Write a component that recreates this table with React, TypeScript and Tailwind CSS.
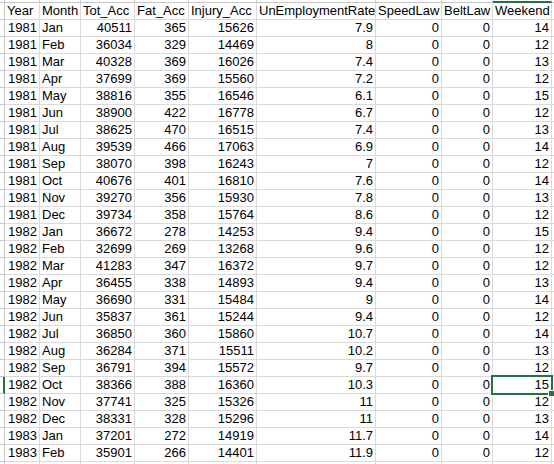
const headers = ["Year", "Month", "Tot_Acc", "Fat_Acc", "Injury_Acc", "UnEmploymentRate", "SpeedLaw", "BeltLaw", "Weekend"];

const rows: (string | number)[][] = [
  [1981, "Jan", 40511, 365, 15626, 7.9, 0, 0, 14],
  [1981, "Feb", 36034, 329, 14469, 8, 0, 0, 12],
  [1981, "Mar", 40328, 369, 16026, 7.4, 0, 0, 13],
  [1981, "Apr", 37699, 369, 15560, 7.2, 0, 0, 12],
  [1981, "May", 38816, 355, 16546, 6.1, 0, 0, 15],
  [1981, "Jun", 38900, 422, 16778, 6.7, 0, 0, 12],
  [1981, "Jul", 38625, 470, 16515, 7.4, 0, 0, 13],
  [1981, "Aug", 39539, 466, 17063, 6.9, 0, 0, 14],
  [1981, "Sep", 38070, 398, 16243, 7, 0, 0, 12],
  [1981, "Oct", 40676, 401, 16810, 7.6, 0, 0, 14],
  [1981, "Nov", 39270, 356, 15930, 7.8, 0, 0, 13],
  [1981, "Dec", 39734, 358, 15764, 8.6, 0, 0, 12],
  [1982, "Jan", 36672, 278, 14253, 9.4, 0, 0, 15],
  [1982, "Feb", 32699, 269, 13268, 9.6, 0, 0, 12],
  [1982, "Mar", 41283, 347, 16372, 9.7, 0, 0, 12],
  [1982, "Apr", 36455, 338, 14893, 9.4, 0, 0, 13],
  [1982, "May", 36690, 331, 15484, 9, 0, 0, 14],
  [1982, "Jun", 35837, 361, 15244, 9.4, 0, 0, 12],
  [1982, "Jul", 36850, 360, 15860, 10.7, 0, 0, 14],
  [1982, "Aug", 36284, 371, 15511, 10.2, 0, 0, 13],
  [1982, "Sep", 36791, 394, 15572, 9.7, 0, 0, 12],
  [1982, "Oct", 38366, 388, 16360, 10.3, 0, 0, 15],
  [1982, "Nov", 37741, 325, 15326, 11, 0, 0, 12],
  [1982, "Dec", 38331, 328, 15296, 11, 0, 0, 13],
  [1983, "Jan", 37201, 272, 14919, 11.7, 0, 0, 14],
  [1983, "Feb", 35901, 266, 14401, 11.9, 0, 0, 12],
];

// selected cell: Weekend of 1982 Oct
const selRow = 21;
const selCol = 8;

const cell = "h-[17px] border-r border-b border-[#dadada] px-[2px] leading-[16px] whitespace-nowrap overflow-hidden";

export default function App() {
  return (
    <div className="w-[554px] h-[464px] overflow-hidden bg-white text-[13px] text-black font-['Liberation_Sans',Arial,sans-serif]">
      <div className="grid grid-cols-[5px_35px_41px_54px_54px_68px_119px_66px_51px_59px_1fr]">
        {/* column header strip (cut off) */}
        <div className="h-[3px] border-r border-b border-[#c6c6c6]" />
        {headers.map((h, i) => (
          <div
            key={h}
            className={i === selCol ? "h-[3px] border-r border-[#dadada] border-b-2 border-b-[#217346]" : "h-[3px] border-r border-b border-[#c6c6c6]"}
          />
        ))}
        <div className="h-[3px] border-b border-[#c6c6c6]" />

        {/* header row */}
        <div className="h-[17px] border-r border-b border-[#c6c6c6]" />
        {headers.map((h) => (
          <div key={h} className={cell}>{h}</div>
        ))}
        <div className="h-[17px] border-b border-[#dadada]" />

        {rows.map((r, ri) => (
          <Row key={ri} r={r} selected={ri === selRow} />
        ))}

        <div className="h-[17px] border-r border-[#c6c6c6]" />
        {headers.map((h) => (
          <div key={h} className="h-[17px] border-r border-[#dadada]" />
        ))}
        <div />
      </div>
    </div>
  );
}

function Row({ r, selected }: { r: (string | number)[]; selected: boolean }) {
  return (
    <>
      <div className={selected ? "h-[17px] border-r-2 border-r-[#217346] border-b border-b-[#c6c6c6]" : "h-[17px] border-r border-b border-[#c6c6c6]"} />
      {r.map((v, ci) => (
        <div key={ci} className={`${cell} ${typeof v === "number" ? "text-right" : "text-left"} ${selected && ci === selCol ? "relative overflow-visible" : ""}`}>
          {v}
          {selected && ci === selCol ? (
            <div className="absolute -left-[2px] -top-[2px] w-[62px] h-[20px] border-2 border-[#217346]">
              <div className="absolute -right-[4px] -bottom-[4px] w-[7px] h-[7px] bg-[#217346] border border-white" />
            </div>
          ) : null}
        </div>
      ))}
      <div className="h-[17px] border-b border-[#dadada]" />
    </>
  );
}
